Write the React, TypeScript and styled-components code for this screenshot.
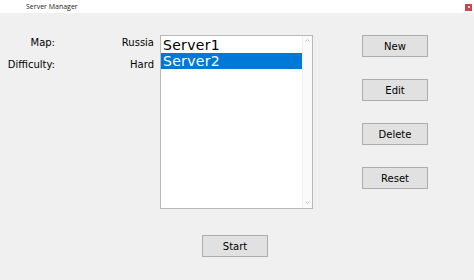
import React, { useState } from 'react';
import styled, { createGlobalStyle } from 'styled-components';

const GlobalStyle = createGlobalStyle`
    html, body {
        margin: 0;
        padding: 0;
        background: #f0f0f0;
    }
    #root {
        width: 474px;
        height: 280px;
    }
`;

const Window = styled.div`
    width: 474px;
    height: 280px;
    display: flex;
    flex-direction: column;
    background: #f0f0f0;
    font-family: "DejaVu Sans", "Open Sans", sans-serif;
    color: #000;
    overflow: hidden;
`;

const TitleBar = styled.div`
    height: 13px;
    flex: 0 0 13px;
    background: #fff;
    display: flex;
    align-items: center;
    justify-content: space-between;
    padding: 0 2px 0 26px;
    box-sizing: border-box;
`;

const Title = styled.span`
    font-family: "Open Sans", "Liberation Sans", sans-serif;
    font-size: 7px;
    color: #222;
`;

const CloseBox = styled.span`
    width: 7px;
    height: 7px;
    margin-top: 1px;
    background: #c94550;
    display: flex;
    align-items: center;
    justify-content: center;

    &::after {
        content: '';
        width: 2px;
        height: 2px;
        background: #f3c9cc;
    }
`;

const Content = styled.div`
    flex: 1;
    display: flex;
    flex-direction: row;
    align-items: flex-start;
    padding: 18px 0 0 12px;
`;

const InfoGrid = styled.div`
    display: grid;
    grid-template-columns: 43px 100px;
    grid-auto-rows: 22px;
    width: 148px;
    font-size: 10px;
`;

const Label = styled.div`
    display: flex;
    align-items: center;
    justify-content: flex-end;
`;

const Value = styled(Label)`
    padding-right: 1px;
`;

const CenterColumn = styled.div`
    display: flex;
    flex-direction: column;
    align-items: center;
    margin-top: 4px;
`;

const ListBox = styled.div`
    width: 153px;
    height: 174px;
    box-sizing: border-box;
    border: 1px solid #b9b9b9;
    background: #fff;
    display: flex;
    flex-direction: row;
`;

const Items = styled.div`
    flex: 1;
    padding-top: 1px;
`;

const Item = styled.div<{ $selected?: boolean }>`
    height: 16px;
    line-height: 16px;
    padding-left: 2px;
    font-size: 14px;
    font-weight: 500;
    letter-spacing: 0.3px;
    background: ${(p) => (p.$selected ? '#0078d7' : 'transparent')};
    color: ${(p) => (p.$selected ? '#fff' : '#000')};
    cursor: default;
`;

const ScrollBar = styled.div`
    width: 9px;
    display: flex;
    flex-direction: column;
    justify-content: space-between;
    align-items: center;
    padding: 3px 0 4px;
    background: #fafafa;
    border-left: 1px solid #f0f0f0;
`;

const Arrow = styled.svg`
    width: 5px;
    height: 3px;
    display: block;
`;

const ButtonColumn = styled.div`
    display: flex;
    flex-direction: column;
    gap: 22px;
    margin: 4px 0 0 49px;
`;

const Button = styled.button`
    width: 66px;
    height: 22px;
    box-sizing: border-box;
    border: 1px solid #adadad;
    background: #e1e1e1;
    font-family: "DejaVu Sans", "Open Sans", sans-serif;
    font-size: 10px;
    color: #000;
    padding: 0;
    cursor: default;
`;

const StartButton = styled(Button)`
    margin-top: 26px;
    margin-right: 3px;
`;

const servers = ['Server1', 'Server2'];

const App: React.FC = () => {
    const [selected, setSelected] = useState(1);

    return (
        <>
            <GlobalStyle />
            <Window>
                <TitleBar>
                    <Title>Server Manager</Title>
                    <CloseBox />
                </TitleBar>
                <Content>
                    <InfoGrid>
                        <Label>Map:</Label>
                        <Value>Russia</Value>
                        <Label>Difficulty:</Label>
                        <Value>Hard</Value>
                    </InfoGrid>
                    <CenterColumn>
                        <ListBox>
                            <Items>
                                {servers.map((name, i) => (
                                    <Item key={name} $selected={i === selected} onClick={() => setSelected(i)}>
                                        {name}
                                    </Item>
                                ))}
                            </Items>
                            <ScrollBar>
                                <Arrow viewBox="0 0 5 3">
                                    <path d="M0.5 2.5 L2.5 0.5 L4.5 2.5" fill="none" stroke="#c4c4c4" strokeWidth="1" />
                                </Arrow>
                                <Arrow viewBox="0 0 5 3">
                                    <path d="M0.5 0.5 L2.5 2.5 L4.5 0.5" fill="none" stroke="#c4c4c4" strokeWidth="1" />
                                </Arrow>
                            </ScrollBar>
                        </ListBox>
                        <StartButton>Start</StartButton>
                    </CenterColumn>
                    <ButtonColumn>
                        <Button>New</Button>
                        <Button>Edit</Button>
                        <Button>Delete</Button>
                        <Button>Reset</Button>
                    </ButtonColumn>
                </Content>
            </Window>
        </>
    );
};

export default App;
